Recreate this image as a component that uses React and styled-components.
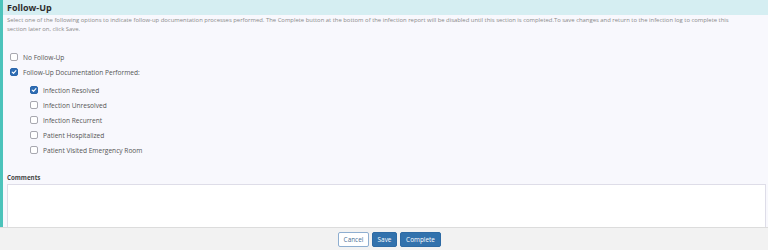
import React from "react";
import styled, { createGlobalStyle } from "styled-components";

const Global = createGlobalStyle`
  html, body { margin: 0; padding: 0; background: #f8f8fd; }
  body { font-family: "Open Sans", "Liberation Sans", sans-serif; }
  * { box-sizing: border-box; }
`;

const Page = styled.div`
  width: 768px;
  height: 250px;
  display: flex;
  flex-direction: column;
  overflow: hidden;
`;

const Panel = styled.div`
  flex: 1;
  display: flex;
  flex-direction: column;
  border-left: 3px solid #4cc3bb;
  background: #f8f8fd;
`;

const Header = styled.div`
  height: 15px;
  background: #d5eef2;
  display: flex;
  align-items: center;
  padding-left: 4px;
  font-size: 9px;
  font-weight: 700;
  color: #2d2d2d;
`;

const Intro = styled.p`
  margin: 1px 0 0 4px;
  font-size: 5.9px;
  line-height: 9px;
  color: #8a8a8a;
  width: 740px;
`;

const List = styled.div`
  display: flex;
  flex-direction: column;
  margin: 18px 0 0 ${(p) => p.$indent}px;
  gap: ${(p) => p.$gap}px;
`;

const Row = styled.label`
  display: flex;
  align-items: center;
  gap: 5px;
  font-size: 6.6px;
  color: #555;
  height: 10px;
`;

const Box = styled.span`
  width: 8px;
  height: 8px;
  border-radius: 2px;
  border: 1px solid ${(p) => (p.$checked ? "#2a66ad" : "#a8a8b0")};
  background: ${(p) => (p.$checked ? "#2f6db3" : "#fff")};
  display: flex;
  align-items: center;
  justify-content: center;
`;

const SubList = styled.div`
  display: flex;
  flex-direction: column;
  gap: 5px;
  margin: 8px 0 0 27px;
`;

const Comments = styled.div`
  margin-top: auto;
  padding: 0 2px 0 4px;
  display: flex;
  flex-direction: column;
`;

const CommentsLabel = styled.div`
  font-size: 6.2px;
  font-weight: 700;
  color: #444;
  margin-bottom: 2px;
`;

const TextArea = styled.div`
  height: 43px;
  background: #fff;
  border: 1px solid #dedde8;
  border-bottom: none;
`;

const Footer = styled.div`
  height: 23px;
  background: #f2f2f2;
  border-top: 1px solid #dcdcdc;
  display: flex;
  justify-content: center;
  align-items: center;
  gap: 3px;
  padding-left: 11px;
`;

const Button = styled.button`
  height: 15px;
  width: ${(p) => p.$w}px;
  padding: 0;
  font-family: "Open Sans", "Liberation Sans", sans-serif;
  font-size: 6.4px;
  border-radius: 2px;
  border: 1px solid ${(p) => (p.$secondary ? "#8eaed0" : "#2d6aa4")};
  background: ${(p) => (p.$secondary ? "#fff" : "#3272ad")};
  color: ${(p) => (p.$secondary ? "#4a6f95" : "#fff")};
  cursor: pointer;
`;

const Check = () => (
  <svg width="6" height="6" viewBox="0 0 10 10">
    <path d="M2 5.2 L4.2 7.4 L8.2 2.8" stroke="#fff" strokeWidth="1.8" fill="none" strokeLinecap="round" strokeLinejoin="round" />
  </svg>
);

const Option = ({ checked, children }) => (
  <Row>
    <Box $checked={checked}>{checked && <Check />}</Box>
    {children}
  </Row>
);

export default function App() {
  return (
    <Page>
      <Global />
      <Panel>
        <Header>Follow-Up</Header>
        <Intro>
          Select one of the following options to indicate follow-up documentation processes performed. The Complete button at the bottom of the infection report will be disabled until this section is completed.To save changes and return to the infection log to complete this section later on, click Save.
        </Intro>
        <List $indent={7} $gap={5}>
          <Option>No Follow-Up</Option>
          <Option checked>Follow-Up Documentation Performed:</Option>
        </List>
        <SubList>
          <Option checked>Infection Resolved</Option>
          <Option>Infection Unresolved</Option>
          <Option>Infection Recurrent</Option>
          <Option>Patient Hospitalized</Option>
          <Option>Patient Visited Emergency Room</Option>
        </SubList>
        <Comments>
          <CommentsLabel>Comments</CommentsLabel>
          <TextArea />
        </Comments>
      </Panel>
      <Footer>
        <Button $secondary $w={31}>Cancel</Button>
        <Button $w={25}>Save</Button>
        <Button $w={41}>Complete</Button>
      </Footer>
    </Page>
  );
}
